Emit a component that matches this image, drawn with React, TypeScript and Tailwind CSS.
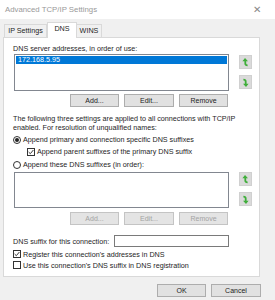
import type { ReactNode } from 'react'

const font = { fontFamily: '"Liberation Sans", Arial, sans-serif' }

function Btn({ children, disabled, w = 'w-[49px]' }: { children: ReactNode; disabled?: boolean; w?: string }) {
  return (
    <div
      className={`${w} h-[13px] flex items-center justify-center border text-[7px] leading-none ${
        disabled ? 'bg-[#e4e4e4] border-[#c4c4c4] text-[#a3a3a3]' : 'bg-[#e1e1e1] border-[#adadad] text-[#222]'
      }`}
    >
      {children}
    </div>
  )
}

function Arrow({ down }: { down?: boolean }) {
  return (
    <div className="w-[13px] h-[14px] bg-[#dadada] border border-[#d0d0d0] flex items-center justify-center">
      <svg width="7" height="9" viewBox="0 0 7 9" className={down ? 'rotate-180' : ''}>
        <path d="M3 0 L6 3.2 H4.2 V5.5 Q4.2 6.6 5.6 6.6 V8.3 Q2.4 8.3 2.4 5.6 V3.2 H0.4 Z" fill="#3fae3a" />
      </svg>
    </div>
  )
}

function Check({ checked }: { checked?: boolean }) {
  return (
    <div className="w-[8px] h-[8px] border border-[#333] bg-white flex items-center justify-center shrink-0">
      {checked ? (
        <svg width="6" height="6" viewBox="0 0 6 6">
          <path d="M0.6 3 L2.3 4.7 L5.4 1" stroke="#222" strokeWidth="0.9" fill="none" />
        </svg>
      ) : null}
    </div>
  )
}

function Radio({ checked }: { checked?: boolean }) {
  return (
    <div className="w-[8px] h-[8px] rounded-full border border-[#333] bg-white flex items-center justify-center shrink-0">
      {checked ? <div className="w-[4px] h-[4px] rounded-full bg-[#222]" /> : null}
    </div>
  )
}

export default function App() {
  return (
    <div className="w-[275px] h-[300px] bg-[#f0f0f0] overflow-hidden text-[#1e1e1e]" style={font}>
      <div className="h-[19px] bg-white flex items-center justify-between pl-[5px] pr-[14px]">
        <span className="text-[7.8px] text-[#999]">Advanced TCP/IP Settings</span>
        <span className="text-[10px] text-[#888] leading-none">✕</span>
      </div>

      <div className="mt-[3px] pl-[4px] flex items-end h-[15px] relative z-10">
        <div className="h-[13px] w-[43px] border border-b-0 border-[#d9d9d9] bg-[#f0f0f0] flex items-center justify-center text-[7.2px]">
          IP Settings
        </div>
        <div className="h-[16px] -mb-px w-[30px] border border-b-0 border-[#d9d9d9] bg-white flex items-center justify-center text-[7.2px] pb-[2px]">
          DNS
        </div>
        <div className="h-[13px] w-[25px] border border-l-0 border-b-0 border-[#d9d9d9] bg-[#f0f0f0] flex items-center justify-center text-[7.2px]">
          WINS
        </div>
      </div>

      <div className="ml-[3px] w-[257px] h-[240px] bg-white border border-[#d9d9d9] pl-[9px] text-[7.2px] leading-[9px]">
        <div className="mt-[6px]">DNS server addresses, in order of use:</div>
        <div className="mt-px flex">
          <div className="ml-px w-[215px] h-[37px] border border-[#828790] p-px">
            <div className="bg-[#0078d7] text-white h-[8px] leading-[8px] pl-[2px]">172.168.5.95</div>
          </div>
          <div className="ml-[10px] flex flex-col">
            <div className="mt-px">
              <Arrow />
            </div>
            <div className="mt-[6px]">
              <Arrow down />
            </div>
          </div>
        </div>
        <div className="mt-[3px] flex gap-[5px] ml-[57px]">
          <Btn>Add...</Btn>
          <Btn w="w-[50px]">Edit...</Btn>
          <Btn>Remove</Btn>
        </div>
        <div className="mt-[7px]">
          The following three settings are applied to all connections with TCP/IP
          <br />
          enabled. For resolution of unqualified names:
        </div>
        <div className="mt-[2px] h-[11px] flex items-center gap-[2px]">
          <Radio checked />
          <span>Append primary and connection specific DNS suffixes</span>
        </div>
        <div className="mt-px h-[11px] flex items-center gap-[2px] pl-[14px]">
          <Check checked />
          <span>Append parent suffixes of the primary DNS suffix</span>
        </div>
        <div className="mt-[2px] h-[11px] flex items-center gap-[2px]">
          <Radio />
          <span>Append these DNS suffixes (in order):</span>
        </div>
        <div className="mt-[2px] flex">
          <div className="ml-px w-[215px] h-[36px] border border-[#828790]" />
          <div className="ml-[10px] flex flex-col">
            <div className="mt-0">
              <Arrow />
            </div>
            <div className="mt-[6px]">
              <Arrow down />
            </div>
          </div>
        </div>
        <div className="mt-[4px] flex gap-[5px] ml-[57px]">
          <Btn disabled>Add...</Btn>
          <Btn disabled w="w-[50px]">Edit...</Btn>
          <Btn disabled>Remove</Btn>
        </div>
        <div className="mt-[10px] flex items-center">
          <span className="w-[101px]">DNS suffix for this connection:</span>
          <div className="w-[115px] h-[12px] border border-[#7a7a7a]" />
        </div>
        <div className="mt-[2px] h-[10px] flex items-center gap-[2px]">
          <Check checked />
          <span>Register this connection's addresses in DNS</span>
        </div>
        <div className="mt-px h-[10px] flex items-center gap-[2px]">
          <Check />
          <span>Use this connection's DNS suffix in DNS registration</span>
        </div>
      </div>

      <div className="mt-[7px] flex justify-end gap-[5px] pr-[14px]">
        <Btn>OK</Btn>
        <Btn w="w-[50px]">Cancel</Btn>
      </div>
    </div>
  )
}
